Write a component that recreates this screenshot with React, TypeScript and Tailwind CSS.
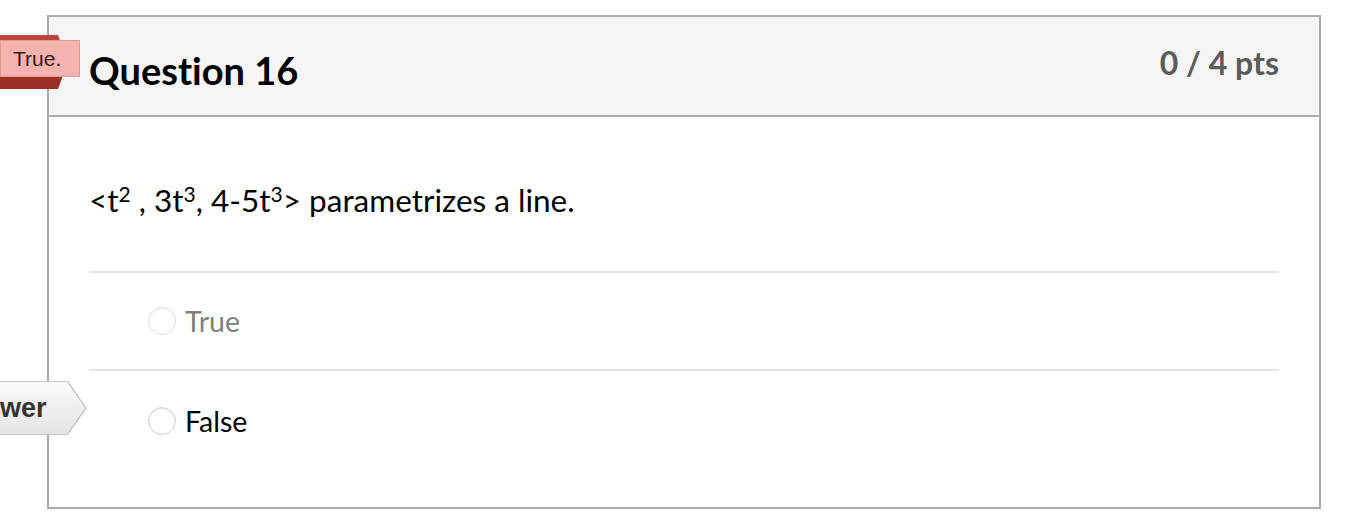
import React from "react";

export default function App() {
  return (
    <div className="relative w-[1362px] h-[528px] bg-white overflow-hidden [font-variant-ligatures:none]" style={{ fontFamily: "Lato, 'Liberation Sans', sans-serif" }}>
      <div className="absolute left-[47px] top-[15px] w-[1274px] h-[494px] border-2 border-[#aaaaaa] flex flex-col">
        <div className="h-[100px] bg-[#f5f5f5] border-b-2 border-[#aaaaaa] flex justify-between px-[40px]">
          <div className="pt-[34px] text-[38px] font-bold text-black leading-none">Question 16</div>
          <div className="pt-[30px] text-[32px] font-bold text-[#5b5b5b] leading-none">0 / 4 pts</div>
        </div>
        <div className="px-[40px] flex flex-col">
          <div className="pt-[63px] pb-[51px] text-[31.5px] leading-[40px] text-black border-b-2 border-[#e3e3e3]">
            &lt;t<sup className="text-[21px]">2</sup> , 3t<sup className="text-[21px]">3</sup>, 4-5t<sup className="text-[21px]">3</sup>&gt; parametrizes a line.
          </div>
          <div className="h-[98px] flex items-center pl-[59px] border-b-2 border-[#e3e3e3]">
            <div className="w-[28px] h-[28px] rounded-full border border-[#e0e0e0] bg-white shadow-[inset_0_1px_2px_rgba(0,0,0,0.08)]" />
            <span className="ml-[9px] text-[28.5px] text-[#808080]">True</span>
          </div>
          <div className="h-[100px] flex items-center pl-[59px]">
            <div className="w-[28px] h-[28px] rounded-full border border-[#cfcfcf] bg-white shadow-[inset_0_1px_2px_rgba(0,0,0,0.12)]" />
            <span className="ml-[9px] text-[28.5px] text-black">False</span>
          </div>
        </div>
      </div>

      {/* True. tag */}
      <div className="absolute left-0 top-[35px] w-[68px] h-[54px] bg-gradient-to-b from-[#c0463c] to-[#962c24] [clip-path:polygon(0_0,58px_0,68px_27px,58px_54px,0_54px)]" />
      <div className="absolute left-0 top-[40px] w-[80px] h-[37px] bg-[#f4b3ae] border border-[#e39a94] flex items-center pl-[12px] text-[21px] text-[#3a1410]" style={{ fontFamily: "'Liberation Sans', Arial, sans-serif" }}>
        True.
      </div>

      {/* wer tag */}
      <div className="absolute left-0 top-[381px] w-[87px] h-[54px] bg-[#c6c6c6] [clip-path:polygon(0_0,68px_0,87px_27px,68px_54px,0_54px)]">
        <div className="absolute left-0 top-[1px] w-[85px] h-[52px] bg-gradient-to-b from-[#fbfbfb] to-[#e4e4e4] [clip-path:polygon(0_0,67px_0,85px_26px,67px_52px,0_52px)]" />
      </div>
      <div className="absolute left-0 top-[381px] h-[54px] flex items-center">
        <span className="text-[27px] font-bold text-[#333333] leading-none" style={{ fontFamily: "'Liberation Sans', Arial, sans-serif" }}>wer</span>
      </div>
    </div>
  );
}
